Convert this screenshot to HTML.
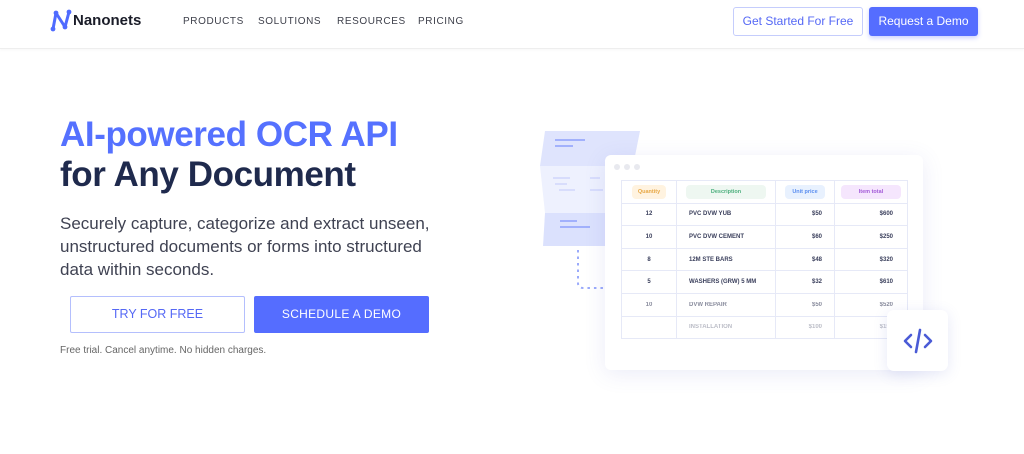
<!DOCTYPE html><html><head><style>
*{margin:0;padding:0;box-sizing:border-box}
body{width:1024px;height:454px;background:#fff;font-family:"Liberation Sans",sans-serif;position:relative;overflow:hidden}
.a{position:absolute}
.nav{font-size:10px;color:#3d3f4a;letter-spacing:.6px;top:16px}
.t td{border:1px solid #e6e9f7;height:22.6px;font-size:6px;font-weight:bold;color:#3a3f5c}
</style></head><body>
<div class="a" style="left:0;top:0;width:1024px;height:49px;border-bottom:1px solid #eee;box-shadow:0 1px 3px rgba(0,0,0,.04)"></div>
<svg class="a" style="left:50px;top:9px" width="22" height="24" viewBox="0 0 22 24"><path d="M3 20 L6 4 L15 18 L19 3" stroke="#4f6bff" stroke-width="3" fill="none" stroke-linejoin="round"/><circle cx="3" cy="20" r="2.4" fill="#4f6bff"/><circle cx="6" cy="4" r="2.4" fill="#4f6bff"/><circle cx="15" cy="18" r="2.4" fill="#4f6bff"/><circle cx="19" cy="3" r="2.4" fill="#4f6bff"/></svg>
<div class="a" style="left:73px;top:12px;font-size:15px;font-weight:bold;color:#1a1c28">Nanonets</div>
<div class="a nav" style="left:183px">PRODUCTS</div>
<div class="a nav" style="left:258px">SOLUTIONS</div>
<div class="a nav" style="left:337px">RESOURCES</div>
<div class="a nav" style="left:418px">PRICING</div>
<div class="a" style="left:733px;top:7px;width:130px;height:29px;border:1px solid #c5cdfc;border-radius:3px;color:#5568f5;font-size:12px;text-align:center;line-height:27px">Get Started For Free</div>
<div class="a" style="left:869px;top:7px;width:109px;height:29px;background:#556dff;border-radius:3px;color:#fff;font-size:12px;text-align:center;line-height:29px;box-shadow:0 2px 5px rgba(80,100,255,.3)">Request a Demo</div>
<div class="a" style="left:60px;top:115px;font-size:35px;font-weight:bold;color:#5571ff;letter-spacing:-.4px">AI-powered OCR API</div>
<div class="a" style="left:60px;top:155px;font-size:35px;font-weight:bold;color:#1f2a4d;letter-spacing:-.4px">for Any Document</div>
<div class="a" style="left:60px;top:212px;font-size:17px;color:#3f4252;line-height:23px;width:378px">Securely capture, categorize and extract unseen, unstructured documents or forms into structured data within seconds.</div>
<div class="a" style="left:70px;top:296px;width:175px;height:37px;border:1px solid #b4bffd;border-radius:2px;color:#5568f5;font-size:12.5px;text-align:center;line-height:35px">TRY FOR FREE</div>
<div class="a" style="left:254px;top:296px;width:175px;height:37px;background:#556dff;border-radius:2px;color:#fff;font-size:12px;text-align:center;line-height:37px;letter-spacing:.3px">SCHEDULE A DEMO</div>
<div class="a" style="left:60px;top:345px;font-size:10px;color:#666">Free trial. Cancel anytime. No hidden charges.</div>
<svg class="a" style="left:535px;top:128px" width="110" height="170" viewBox="0 0 110 170"><polygon points="10,3 105,3 98,38 5,38" fill="#dfe4fd"/><polygon points="5,38 98,38 98,85 10,85" fill="#eef1fe"/><polygon points="10,85 98,85 95,118 8,118" fill="#dbe1fd"/><g stroke="#8ea0fb" stroke-width="1.5"><line x1="20" y1="12" x2="50" y2="12"/><line x1="20" y1="18" x2="38" y2="18"/><line x1="25" y1="93" x2="42" y2="93"/><line x1="25" y1="99" x2="55" y2="99"/></g><g stroke="#c9d0fb" stroke-width="1.2"><line x1="18" y1="50" x2="35" y2="50"/><line x1="20" y1="56" x2="32" y2="56"/><line x1="24" y1="62" x2="40" y2="62"/><line x1="55" y1="50" x2="65" y2="50"/><line x1="55" y1="62" x2="68" y2="62"/></g><path d="M43 122 V155 Q43 160 48 160 H70" stroke="#9aaafb" stroke-width="2" stroke-dasharray="2.5 4" fill="none"/></svg>
<div class="a" style="left:605px;top:155px;width:318px;height:215px;background:#fff;border-radius:6px;box-shadow:0 4px 22px rgba(90,100,200,.12)"></div>
<div class="a" style="left:614px;top:164px;width:6px;height:6px;border-radius:50%;background:#e8e9ef"></div>
<div class="a" style="left:624px;top:164px;width:6px;height:6px;border-radius:50%;background:#e8e9ef"></div>
<div class="a" style="left:634px;top:164px;width:6px;height:6px;border-radius:50%;background:#e8e9ef"></div>
<table class="a t" style="left:621px;top:180px;width:287px;border-collapse:collapse">
<tr><td style="width:55px;text-align:center"><span style="display:inline-block;background:#fff3e0;color:#e8a845;padding:4px 6px;border-radius:4px;font-size:5.5px">Quantity</span></td><td style="width:99px;text-align:center"><span style="display:inline-block;background:#eef7f1;color:#4caf7d;padding:4px 25px;border-radius:4px;font-size:5.5px">Description</span></td><td style="width:59px;text-align:center"><span style="display:inline-block;background:#e8f1fe;color:#5a8ef0;padding:4px 7px;border-radius:4px;font-size:5.5px">Unit price</span></td><td style="text-align:center"><span style="display:inline-block;background:#f5e6fd;color:#a35ad8;padding:4px 18px;border-radius:4px;font-size:5.5px">Item total</span></td></tr>
<tr><td align="center">12</td><td style="padding-left:12px">PVC DVW YUB</td><td align="right" style="padding-right:12px">$50</td><td align="right" style="padding-right:14px">$600</td></tr>
<tr><td align="center">10</td><td style="padding-left:12px">PVC DVW CEMENT</td><td align="right" style="padding-right:12px">$60</td><td align="right" style="padding-right:14px">$250</td></tr>
<tr><td align="center">8</td><td style="padding-left:12px">12M STE BARS</td><td align="right" style="padding-right:12px">$48</td><td align="right" style="padding-right:14px">$320</td></tr>
<tr><td align="center">5</td><td style="padding-left:12px">WASHERS (GRW) 5 MM</td><td align="right" style="padding-right:12px">$32</td><td align="right" style="padding-right:14px">$610</td></tr>
<tr style="opacity:.6"><td align="center">10</td><td style="padding-left:12px">DVW REPAIR</td><td align="right" style="padding-right:12px">$50</td><td align="right" style="padding-right:14px">$520</td></tr>
<tr style="opacity:.35"><td></td><td style="padding-left:12px">INSTALLATION</td><td align="right" style="padding-right:12px">$100</td><td align="right" style="padding-right:14px">$150</td></tr>
</table>
<div class="a" style="left:887px;top:310px;width:61px;height:61px;background:#fff;border-radius:7px;box-shadow:0 3px 14px rgba(90,100,200,.15)"></div>
<svg class="a" style="left:903px;top:327px" width="30" height="28" viewBox="0 0 30 28"><path d="M8 8 L2 14 L8 20 M22 8 L28 14 L22 20 M17 3 L13 25" stroke="#4a5bd6" stroke-width="2.6" fill="none" stroke-linecap="round" stroke-linejoin="round"/></svg>
</body></html>
